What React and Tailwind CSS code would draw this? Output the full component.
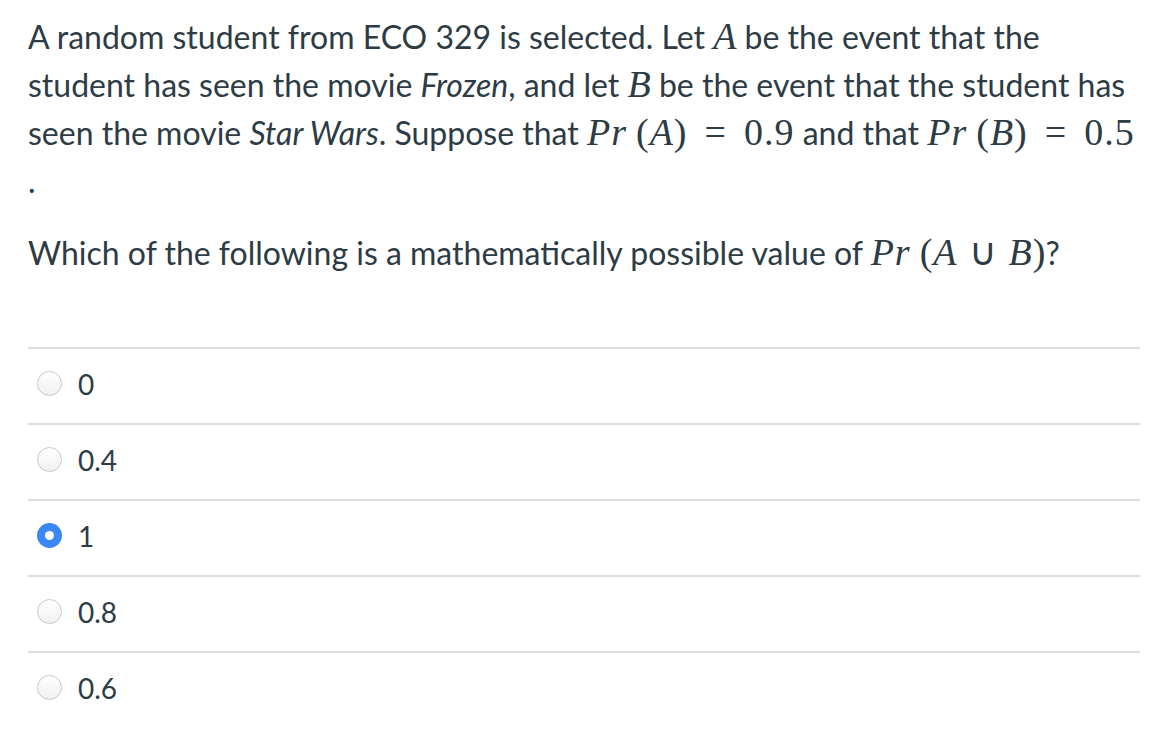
import React from 'react';

// Canvas-style quiz question, single choice
const answers = [
  { label: '0', checked: false },
  { label: '0.4', checked: false },
  { label: '1', checked: true },
  { label: '0.8', checked: false },
  { label: '0.6', checked: false },
];

function M({ children }) {
  return <span className="font-['Liberation_Serif',serif] text-[38px] leading-none">{children}</span>;
}

function Pr({ arg, value }) {
  return (
    <M>
      <i className="tracking-[1px]">Pr</i>
      <span className="ml-[9px] mr-[1px]">(</span>
      {arg}
      <span className="ml-[1px]">)</span>
      {value !== undefined && (
        <>
          <span className="mx-[18px]">=</span>
          <span className="tracking-[1px]">{value}</span>
        </>
      )}
    </M>
  );
}

function Radio({ checked }) {
  if (checked) {
    return (
      <span className="flex h-[25px] w-[25px] shrink-0 items-center justify-center rounded-full bg-[#3b87f5]">
        <span className="h-[9px] w-[9px] rounded-full bg-white" />
      </span>
    );
  }
  return (
    <span className="h-[25px] w-[25px] shrink-0 rounded-full border border-[#c9c9c9] bg-gradient-to-b from-white to-[#f1f1f1]" />
  );
}

export default function App() {
  return (
    <div className="min-h-[732px] bg-white pl-[28px] pr-[26px] pt-[13px] font-['Lato','Liberation_Sans',sans-serif] text-[#2d3b45]">
      <p className="text-[32px] leading-[48px]">
        A random student from ECO 329 is selected. Let <M><i>A</i></M> be the event that the
        <br />
        student has seen the movie <i>Frozen</i>, and let <M><i>B</i></M> be the event that the student has
        <br />
        seen the movie <i>Star Wars</i>. Suppose that <Pr arg={<i>A</i>} value="0.9" /> and that{' '}
        <Pr arg={<i>B</i>} value="0.5" />
        <br />.
      </p>

      <p className="mt-[24px] text-[32px] leading-[48px]">
        Which of the following is a mathematically possible value of{' '}
        <M>
          <i className="tracking-[1px]">Pr</i>
          <span className="ml-[9px] mr-[1px]">(</span>
          <i>A</i>
          <span className="mx-[12px] font-light">∪</span>
          <i>B</i>
          <span className="ml-[1px]">)</span>
        </M>
        ?
      </p>

      <div className="mt-[70px]">
        {answers.map((a) => (
          <div
            key={a.label}
            className="flex h-[76px] items-center gap-[16px] border-t-2 border-[#dedede] pb-[5px] pl-[9px]"
          >
            <Radio checked={a.checked} />
            <span className="text-[28px] leading-none">{a.label}</span>
          </div>
        ))}
      </div>
    </div>
  );
}
